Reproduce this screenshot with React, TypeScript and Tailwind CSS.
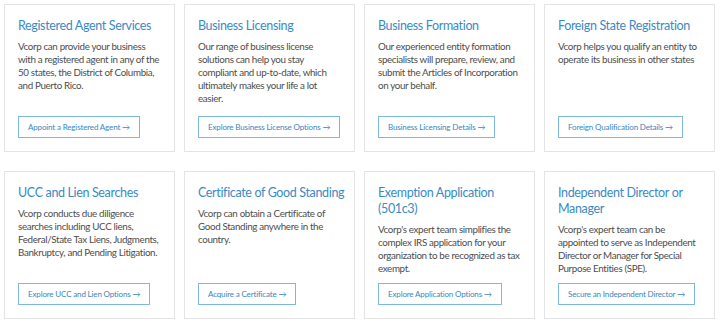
import React from 'react';

const services = [
  {
    title: 'Registered Agent Services',
    description:
      'Vcorp can provide your business with a registered agent in any of the 50 states, the District of Columbia, and Puerto Rico.',
    cta: 'Appoint a Registered Agent',
  },
  {
    title: 'Business Licensing',
    description:
      'Our range of business license solutions can help you stay compliant and up-to-date, which ultimately makes your life a lot easier.',
    cta: 'Explore Business License Options',
  },
  {
    title: 'Business Formation',
    description:
      'Our experienced entity formation specialists will prepare, review, and submit the Articles of Incorporation on your behalf.',
    cta: 'Business Licensing Details',
  },
  {
    title: 'Foreign State Registration',
    description: 'Vcorp helps you qualify an entity to operate its business in other states',
    cta: 'Foreign Qualification Details',
  },
  {
    title: 'UCC and Lien Searches',
    description:
      'Vcorp conducts due diligence searches including UCC liens, Federal/State Tax Liens, Judgments, Bankruptcy, and Pending Litigation.',
    cta: 'Explore UCC and Lien Options',
  },
  {
    title: 'Certificate of Good Standing',
    description: 'Vcorp can obtain a Certificate of Good Standing anywhere in the country.',
    cta: 'Acquire a Certificate',
  },
  {
    title: 'Exemption Application (501c3)',
    description:
      "Vcorp's expert team simplifies the complex IRS application for your organization to be recognized as tax exempt.",
    cta: 'Explore Application Options',
  },
  {
    title: 'Independent Director or Manager',
    description:
      "Vcorp's expert team can be appointed to serve as Independent Director or Manager for Special Purpose Entities (SPE).",
    cta: 'Secure an Independent Director',
  },
];

export default function App() {
  return (
    <div
      className="w-[720px] h-[325px] bg-white p-1 overflow-hidden"
      style={{ fontFamily: 'Lato, "Open Sans", sans-serif' }}
    >
      <div className="grid grid-cols-4 gap-x-[9px] gap-y-[19px] w-[711px]">
        {services.map((s) => (
          <div
            key={s.title}
            className="h-[148px] border border-[#e4e4e4] flex flex-col pt-[13px] pl-[13px] pr-[9px] pb-[13px]"
          >
            <h3 className="text-[12.5px] leading-[16px] tracking-[-0.35px] text-[#3a8ac6]">{s.title}</h3>
            <p className="mt-[6px] pr-[3px] text-[9.8px] leading-[13px] tracking-[-0.35px] text-[#4d4d4d]">
              {s.description}
            </p>
            <div className="mt-auto">
              <button className="h-[22px] whitespace-nowrap border border-[#7db8e0] px-[9px] text-[8px] tracking-[-0.15px] text-[#3a86c0]">
                {s.cta} →
              </button>
            </div>
          </div>
        ))}
      </div>
    </div>
  );
}
